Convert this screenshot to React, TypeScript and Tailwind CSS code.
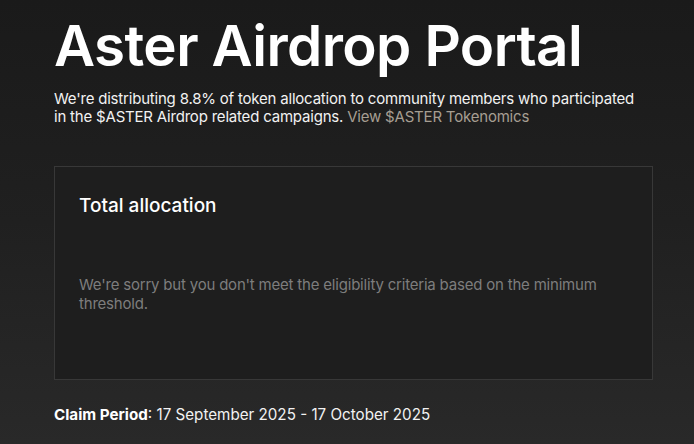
import React from 'react';

const App = () => {
  return (
    <div
      className="min-h-screen w-full bg-gradient-to-b from-[#1a1a1a] via-[#202020] to-[#292929] text-white"
      style={{ fontFamily: 'Inter, "Noto Sans", sans-serif' }}
    >
      <div className="pl-[54px] pr-[41px] pt-[12px]">
        <h1 className="text-[56.5px] font-semibold leading-[68px] tracking-[-0.6px]">Aster Airdrop Portal</h1>

        <p className="mt-[10px] max-w-[590px] text-[15px] leading-[18px] tracking-[-0.2px] text-[#f2f2f2]">
          We're distributing 8.8% of token allocation to community members who participated in the $ASTER Airdrop
          related campaigns. <span className="text-[#a69e92]">View $ASTER Tokenomics</span>
        </p>

        <section className="mt-[40px] h-[214px] border border-[#383838] bg-[#1e1e1e] px-[24px] pt-[27px]">
          <h2 className="text-[19px] font-medium leading-[24px]">Total allocation</h2>
          <p className="mt-[57px] text-[15px] leading-[19px] tracking-[-0.2px] text-[#7d7d7d]">
            We're sorry but you don't meet the eligibility criteria based on the minimum threshold.
          </p>
        </section>

        <p className="mt-[25px] text-[15.2px] leading-[20px] text-[#f2f2f2]">
          <span className="font-bold text-white">Claim Period</span>: 17 September 2025 - 17 October 2025
        </p>
      </div>
    </div>
  );
};

export default App;
